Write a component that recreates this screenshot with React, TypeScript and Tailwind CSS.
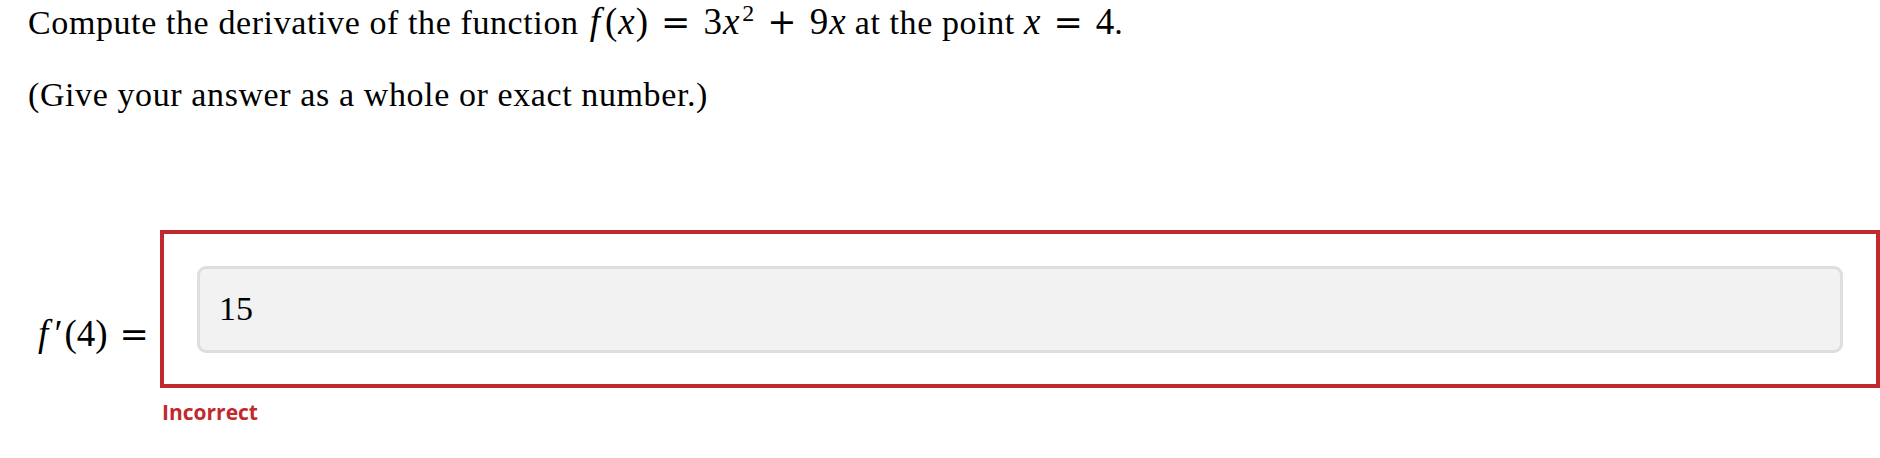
import React from "react";

// Math pieces: MathJax-like italic variables and wide, spaced operators
function V({ children, className = "" }: { children: React.ReactNode; className?: string }) {
  return <span className={`italic ${className}`}>{children}</span>;
}

function Op({ children }: { children: React.ReactNode }) {
  return <span className="mx-[13px] font-['DejaVu_Serif',serif] text-[35px]">{children}</span>;
}

function M({ children }: { children: React.ReactNode }) {
  return <span className="text-[37px] tracking-normal whitespace-nowrap">{children}</span>;
}

export default function App() {
  return (
    <div className="w-[1880px] h-[458px] bg-white text-black font-['Liberation_Serif',serif] overflow-hidden">
      {/* Question text */}
      <div className="pl-[28px] pt-[2px] text-[34px] leading-[40px] tracking-[0.6px]">
        <p>
          Compute the derivative of the function{" "}
          <M>
            <V className="ml-[2px] mr-[5px]">f</V>(<V className="mx-[1px]">x</V>)
            <Op>=</Op>3<V className="ml-[1px]">x</V>
            <sup className="text-[24px] top-[-13px] ml-[3px]">2</sup>
            <Op>+</Op>9<V className="ml-[1px]">x</V>
          </M>{" "}
          at the point{" "}
          <M>
            <V>x</V>
            <Op>=</Op>4
          </M>
          .
        </p>
        <p className="mt-[32px]">(Give your answer as a whole or exact number.)</p>
      </div>

      {/* Answer row */}
      <div className="mt-[115px] flex items-start">
        <div className="w-[160px] pl-[38px] pt-[84px] text-[37px] leading-[40px] whitespace-nowrap">
          <V className="mr-[1px]">f</V>
          <span className="italic ml-[3px]">′</span>
          <span className="ml-[4px]">(4)</span>
          <span className="ml-[12px] font-['DejaVu_Serif',serif] text-[35px]">=</span>
        </div>
        <div className="flex-1 flex flex-col">
          <div className="border-4 border-[#c0292e] px-[33px] pt-[32px] pb-[31px]">
            <div className="h-[87px] rounded-[9px] border-[3px] border-[#dedede] bg-[#f2f2f2] pl-[19px] pt-[20px]">
              <span className="text-[34px] leading-[40px]">15</span>
            </div>
          </div>
          <div className="mt-[10px] pl-[2px] font-['Open_Sans',sans-serif] font-bold text-[21px] leading-[28px] text-[#c0292e]">
            Incorrect
          </div>
        </div>
      </div>
    </div>
  );
}
